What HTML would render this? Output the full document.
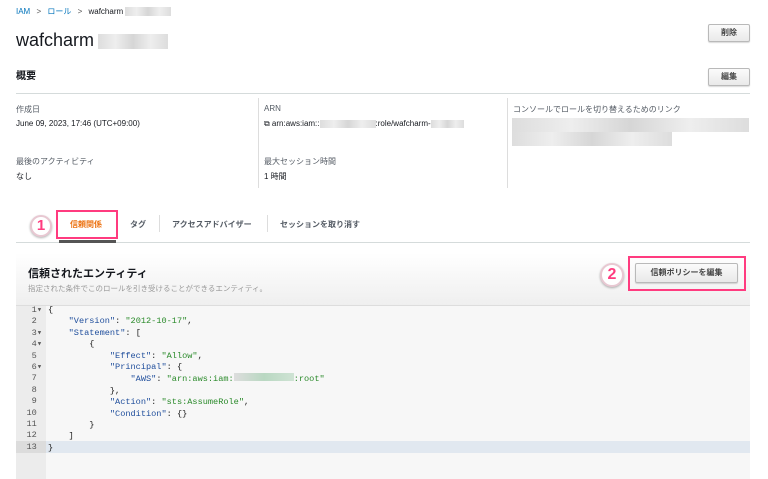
<!DOCTYPE html><html><head><meta charset="utf-8"><style>
body{margin:0;width:768px;height:479px;background:#fff;font-family:"Liberation Sans","Noto Sans CJK JP",sans-serif;color:#16191f;position:relative;overflow:hidden}
.a{position:absolute;white-space:nowrap}
.blur{position:absolute;background:linear-gradient(90deg,#ddd,#eee,#d6d6d6,#eee,#ddd)}
.ib{display:inline-block;vertical-align:middle;background:linear-gradient(90deg,#ddd,#eee,#d6d6d6,#eee,#ddd)}
.btn{position:absolute;border:1px solid #b9b9b9;border-radius:2px;background:linear-gradient(#fbfbfb,#e9e9e9);font-size:8px;font-weight:bold;color:#444;text-align:center;box-shadow:0 1px 1px rgba(0,0,0,.15)}
.lbl{font-size:8px;color:#545b64}
.val{font-size:8px;color:#16191f}
.code{font-family:"Liberation Mono",monospace;font-size:8.6px;color:#1f4e9c}
.s{color:#2a8a2a}
.num{position:absolute;left:16px;width:26px;text-align:right;font-family:"Liberation Mono",monospace;font-size:8.6px;color:#555}
.circ{position:absolute;border-radius:50%;background:#fff;border:2px solid #e8c8d2;box-shadow:0 1px 2px rgba(0,0,0,.3);color:#ff3b7f;font-weight:bold;text-align:center}
</style></head><body>
<div class="a" style="left:16px;top:6px;font-size:8px;color:#0073bb">IAM <span style="color:#555;margin:0 4px">&gt;</span> ロール <span style="color:#555;margin:0 4px">&gt;</span> <span style="color:#16191f">wafcharm</span><span class="ib" style="width:46px;height:9px;margin-left:2px"></span></div>
<div class="a" style="left:16px;top:30px;font-size:18px">wafcharm<span class="ib" style="width:70px;height:15px;margin-left:4px"></span></div>
<div class="btn" style="left:708px;top:24px;width:40px;height:16px;line-height:16px">削除</div>
<div class="a" style="left:16px;top:67px;font-size:10px;font-weight:bold">概要</div>
<div class="btn" style="left:708px;top:68px;width:40px;height:16px;line-height:16px">編集</div>
<div class="a" style="left:16px;top:93px;width:734px;height:1px;background:#d5dbdb"></div>
<div class="a" style="left:258px;top:98px;width:1px;height:90px;background:#ddd"></div>
<div class="a" style="left:507px;top:98px;width:1px;height:90px;background:#ddd"></div>
<div class="a lbl" style="left:16px;top:104px">作成日</div>
<div class="a val" style="left:16px;top:119px">June 09, 2023, 17:46 (UTC+09:00)</div>
<div class="a lbl" style="left:16px;top:156px">最後のアクティビティ</div>
<div class="a val" style="left:16px;top:171px">なし</div>
<div class="a lbl" style="left:264px;top:104px">ARN</div>
<div class="a val" style="left:264px;top:119px">⧉ arn:aws:iam::<span class="ib" style="width:56px;height:8px"></span>:role/wafcharm-<span class="ib" style="width:33px;height:8px"></span></div>
<div class="a lbl" style="left:264px;top:156px">最大セッション時間</div>
<div class="a val" style="left:264px;top:171px">1 時間</div>
<div class="a lbl" style="left:513px;top:104px">コンソールでロールを切り替えるためのリンク</div>
<div class="blur" style="left:512px;top:118px;width:237px;height:14px"></div>
<div class="blur" style="left:512px;top:132px;width:160px;height:14px"></div>
<div class="circ" style="left:30px;top:215px;width:18px;height:18px;line-height:18px;font-size:15px">1</div>
<div class="a" style="left:56px;top:210px;width:58px;height:25px;border:2px solid #ff3b7f"></div>
<div class="a" style="left:70px;top:219px;font-size:8px;font-weight:bold;color:#ec7211">信頼関係</div>
<div class="a" style="left:130px;top:219px;font-size:8px;font-weight:bold;color:#545b64">タグ</div>
<div class="a" style="left:159px;top:215px;width:1px;height:17px;background:#ddd"></div>
<div class="a" style="left:172px;top:219px;font-size:8px;font-weight:bold;color:#545b64">アクセスアドバイザー</div>
<div class="a" style="left:267px;top:215px;width:1px;height:17px;background:#ddd"></div>
<div class="a" style="left:280px;top:219px;font-size:8px;font-weight:bold;color:#545b64">セッションを取り消す</div>
<div class="a" style="left:16px;top:242px;width:734px;height:1px;background:#d5dbdb"></div>
<div class="a" style="left:59px;top:240px;width:57px;height:3px;background:#555"></div>
<div class="a" style="left:16px;top:253px;width:734px;height:52px;background:linear-gradient(#fff,#efefef);border-bottom:1px solid #ddd"></div>
<div class="a" style="left:28px;top:265px;font-size:11px;font-weight:bold">信頼されたエンティティ</div>
<div class="a" style="left:28px;top:283px;font-size:7.5px;color:#999">指定された条件でこのロールを引き受けることができるエンティティ。</div>
<div class="circ" style="left:600px;top:263px;width:20px;height:20px;line-height:20px;font-size:16px">2</div>
<div class="a" style="left:628px;top:256px;width:114px;height:31px;border:2px solid #ff3b7f"></div>
<div class="btn" style="left:635px;top:263px;width:101px;height:18px;line-height:18px">信頼ポリシーを編集</div>
<div class="a" style="left:16px;top:306px;width:734px;height:173px;background:#f7f7f7"></div>
<div class="a" style="left:16px;top:306px;width:30px;height:173px;background:#ececec"></div>
<div class="a" style="left:16px;top:441px;width:734px;height:12px;background:#e1e8f0"></div>
<div class="a" style="left:16px;top:441px;width:30px;height:12px;background:#dcdcdc"></div>
<div class="num" style="top:305px;line-height:11.4px">1▾<br>2&nbsp;<br>3▾<br>4▾<br>5&nbsp;<br>6▾<br>7&nbsp;<br>8&nbsp;<br>9&nbsp;<br>10&nbsp;<br>11&nbsp;<br>12&nbsp;<br>13&nbsp;</div>
<pre class="a code" style="left:48px;top:305px;margin:0;line-height:11.4px;color:#222;white-space:pre">{
    <span class="code">"Version"</span>: <span class="s">"2012-10-17"</span>,
    <span class="code">"Statement"</span>: [
        {
            <span class="code">"Effect"</span>: <span class="s">"Allow"</span>,
            <span class="code">"Principal"</span>: {
                <span class="code">"AWS"</span>: <span class="s">"arn:aws:iam:<span style="display:inline-block;width:60px;height:8px;background:linear-gradient(90deg,#ddd,#b9d8c2,#cfe3d4)"></span>:root"</span>
            },
            <span class="code">"Action"</span>: <span class="s">"sts:AssumeRole"</span>,
            <span class="code">"Condition"</span>: {}
        }
    ]
}</pre>
</body></html>
